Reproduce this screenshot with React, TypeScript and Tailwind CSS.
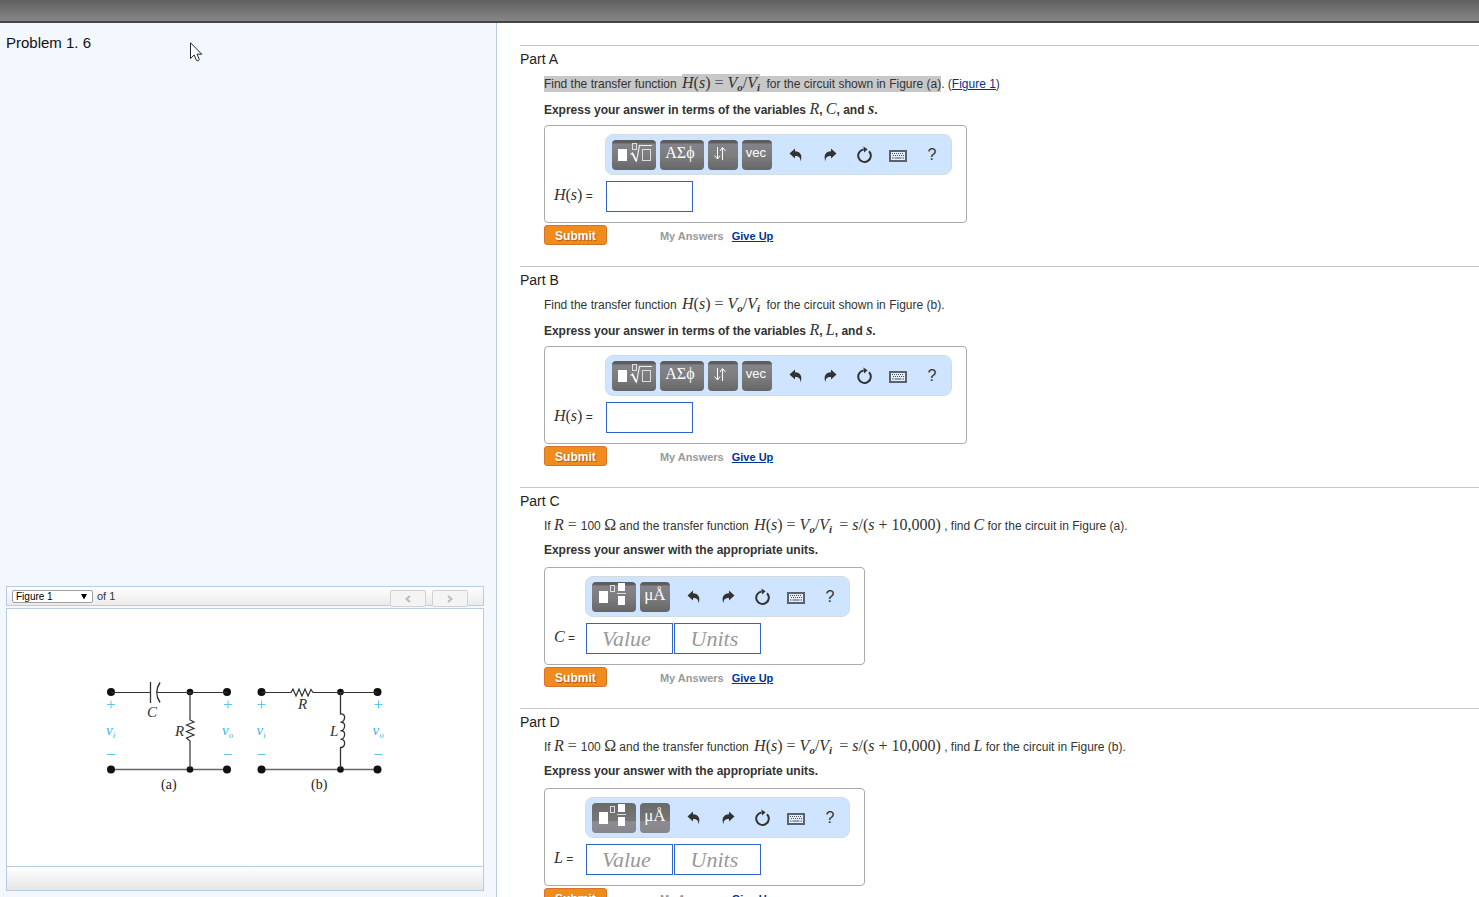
import React, { useState } from 'react';

interface SymbolProps {
  children: React.ReactNode;
  marked?: boolean;
}

// Inline maths set in a serif face
const Tex: React.FC<SymbolProps> = ({ children, marked }) => (
  <span
    className={
      marked
        ? "bg-[#c8c8c8] font-['Liberation_Serif',serif] text-[16px]"
        : "font-['Liberation_Serif',serif] text-[16px]"
    }
  >
    {children}
  </span>
);

const Sub: React.FC<{ children: React.ReactNode }> = ({ children }) => (
  <sub className="font-bold text-[11px] leading-none">{children}</sub>
);

const Eq: React.FC = () => <span className="mx-1 text-[#555]">=</span>;

const TransferFunction: React.FC<{ marked?: boolean }> = ({ marked }) => (
  <span className="mr-[3px] ml-[2px]">
    <Tex marked={marked}>
      <i>H</i>(<i>s</i>)<Eq />
      <i>V</i>
      <Sub>
        <i>o</i>
      </Sub>
      /<i>V</i>
      <Sub>
        <i>i</i>
      </Sub>
    </Tex>
  </span>
);

const UndoIcon = () => (
  <svg width="14" height="14" viewBox="0 0 14 14" fill="#333" aria-hidden="true">
    <path d="M0.5 5.5 6 0.5V3.3C11.5 3.4 13.8 7.5 11.5 13.5 11.6 9.6 10 8 6 8V10.5Z" />
  </svg>
);

const RedoIcon = () => (
  <svg width="14" height="14" viewBox="0 0 14 14" fill="#333" aria-hidden="true">
    <path d="M13.5 5.5 8 0.5V3.3C2.5 3.4 0.2 7.5 2.5 13.5 2.4 9.6 4 8 8 8V10.5Z" />
  </svg>
);

const ResetIcon = () => (
  <svg width="16" height="18" viewBox="0 0 16 18" fill="none" aria-hidden="true">
    <path d="M13 5.2A6.3 6.3 0 1 1 7.6 3.4" stroke="#333" strokeWidth="2" />
    <path d="M7.4 0.5 11.6 3.2 8.2 6.5Z" fill="#333" />
  </svg>
);

const KeyboardIcon = () => (
  <svg width="18" height="12" viewBox="0 0 18 12" fill="none" className="mt-[2px]" aria-hidden="true">
    <rect x="1" y="1" width="16" height="10" fill="#e4eefa" stroke="#5a626c" strokeWidth="2" />
    <path d="M3 3.5H15M4 5.5H15" stroke="#4a525c" strokeWidth="1" strokeDasharray="1 1" />
    <path d="M3 8H4.5M5.5 8H12.5M13.5 8H15" stroke="#4a525c" strokeWidth="1.2" />
  </svg>
);

const RootTemplateIcon = () => (
  <svg width="44" height="30" viewBox="0 0 44 30" fill="none" aria-hidden="true">
    <rect x="6" y="9" width="9" height="12" fill="#fff" />
    <path d="M18.5 14.5 20.5 13 24.5 21 27.5 5.5H40" stroke="#eee" strokeWidth="1.2" />
    <path d="M20.5 13.5 24 21" stroke="#fff" strokeWidth="1.6" />
    <rect x="20.5" y="3.5" width="4" height="6" stroke="#ddd" />
    <rect x="30.5" y="9.5" width="8" height="11" stroke="#ddd" />
  </svg>
);

const FractionTemplateIcon = () => (
  <svg width="44" height="30" viewBox="0 0 44 30" fill="none" aria-hidden="true">
    <rect x="7" y="9" width="9" height="12" fill="#fff" />
    <rect x="18.5" y="3.5" width="4" height="6" stroke="#ddd" />
    <rect x="26" y="1" width="7" height="8" fill="#fff" />
    <path d="M25 11.5H34" stroke="#ddd" />
    <rect x="26" y="14" width="7" height="9" fill="#fff" />
  </svg>
);

const ArrowsIcon = () => (
  <svg width="30" height="30" viewBox="0 0 30 30" fill="none" stroke="#fff" aria-hidden="true">
    <path d="M9.5 7V19M6.5 15.5 9.5 19 12 15.5M14.5 20V8M12 11 14.5 7.5 17.5 11" />
  </svg>
);

interface ToolButtonProps {
  label: string;
  wide?: boolean;
  pressed?: boolean;
  children: React.ReactNode;
}

const ToolButton: React.FC<ToolButtonProps> = ({ label, wide, pressed, children }) => (
  <button
    type="button"
    aria-label={label}
    className={`h-[30px] overflow-hidden rounded text-white ${wide ? 'w-11' : 'w-[30px]'} ${
      pressed
        ? 'bg-[linear-gradient(#6a6a6a,#777_60%,#8d8c94_62%,#86868a)]'
        : 'bg-[linear-gradient(#5c5c5c_8%,#84838a_14%,#7c7c7f_55%,#666)]'
    }`}
  >
    {children}
  </button>
);

const IconButton: React.FC<{ label: string; children: React.ReactNode }> = ({ label, children }) => (
  <button type="button" aria-label={label} className="flex h-[30px] w-[34px] items-center justify-center">
    {children}
  </button>
);

const Toolbar: React.FC<{ units?: boolean; pressed?: boolean }> = ({ units, pressed }) => (
  <div className="flex h-[41px] items-center gap-1 rounded-lg border border-[#d5dbe2] bg-[#cfe5ff] pr-[2px] pl-[6px]">
    {units ? (
      <>
        <ToolButton label="Templates" wide pressed={pressed}>
          <FractionTemplateIcon />
        </ToolButton>
        <ToolButton label="Units" pressed={pressed}>
          <span className="block pb-1 font-['Liberation_Serif',serif] text-[17px] leading-[24px]">μÅ</span>
        </ToolButton>
      </>
    ) : (
      <>
        <ToolButton label="Templates" wide>
          <RootTemplateIcon />
        </ToolButton>
        <ToolButton label="Symbols" wide>
          <span className="block pr-1 pb-1 font-['Liberation_Serif',serif] text-[16px] leading-[24px]">
            ΑΣϕ
          </span>
        </ToolButton>
        <ToolButton label="Arrows">
          <ArrowsIcon />
        </ToolButton>
        <ToolButton label="Vector">
          <span className="block pr-[2px] pb-1 text-[13px] leading-[24px]">vec</span>
        </ToolButton>
      </>
    )}
    <div className="ml-[3px] flex">
      <IconButton label="Undo">
        <UndoIcon />
      </IconButton>
      <IconButton label="Redo">
        <RedoIcon />
      </IconButton>
      <IconButton label="Reset">
        <ResetIcon />
      </IconButton>
      <IconButton label="Keyboard">
        <KeyboardIcon />
      </IconButton>
      <IconButton label="Help">
        <span className="text-[16px] text-[#333]">?</span>
      </IconButton>
    </div>
  </div>
);

interface PartProps {
  id: string;
  question: React.ReactNode;
  instruction: React.ReactNode;
  label: React.ReactNode;
  units?: boolean;
  pressed?: boolean;
}

const fieldClass =
  "h-[31px] w-[87px] border border-[#2f65c8] bg-white pr-3 pl-[6px] text-center font-['Liberation_Serif',serif] text-[22px] italic placeholder:text-[#999] focus:outline-none";

const Part: React.FC<PartProps> = ({ id, question, instruction, label, units, pressed }) => (
  <section className="border-t border-[#c8c8c8] pt-[3px] pb-[21px]">
    <h2 className="mb-px text-[14px] leading-5 text-[#222]">Part {id}</h2>
    <div className="pl-6">
      <p className="h-[26px] text-[12px] leading-[25px] whitespace-nowrap">{question}</p>
      <p className="h-[25px] text-[12px] leading-[25px] font-bold whitespace-nowrap">{instruction}</p>
      <div className="mt-1 grid w-fit grid-cols-[auto_auto] gap-y-[6px] rounded border border-[#aaa] pt-2 pr-[14px] pb-[10px] pl-[9px]">
        <div className="col-start-2">
          <Toolbar units={units} pressed={pressed} />
        </div>
        <label
          htmlFor={`answer-${id}`}
          className={`col-start-1 flex items-center pb-[3px] text-[12px] ${units ? 'w-[31px]' : 'w-[51px]'}`}
        >
          <span>{label}</span>
        </label>
        <div className="flex gap-px pl-px">
          <input id={`answer-${id}`} className={fieldClass} placeholder={units ? 'Value' : undefined} />
          {units && <input aria-label="Units" className={fieldClass} placeholder="Units" />}
        </div>
      </div>
      <div className="mt-[2px] flex h-5 items-center text-[11px] font-bold">
        <button
          type="button"
          className="h-5 w-[63px] rounded-[3px] border border-[#d2752a] bg-[#f08c1e] pt-px text-[12px] font-bold text-white [text-shadow:1px_1px_1px_#a85a10]"
        >
          Submit
        </button>
        <span className="ml-[53px] pt-[2px] text-[#999]">My Answers</span>
        <a href="#give-up" className="ml-2 pt-[2px] text-[#003399] underline">
          Give Up
        </a>
      </div>
    </div>
  </section>
);

const HsLabel = () => (
  <>
    <Tex>
      <i>H</i>(<i>s</i>)
    </Tex>{' '}
    =
  </>
);

const GivenQuestion: React.FC<{ unknown: string; figure: string }> = ({ unknown, figure }) => (
  <>
    If{' '}
    <Tex>
      <i>R</i>
      <Eq />
    </Tex>
    100 <Tex>Ω</Tex> and the transfer function <TransferFunction />
    <Tex>
      <Eq />
      <i>s</i>/(<i>s</i> + 10,000)
    </Tex>{' '}
    , find{' '}
    <Tex>
      <i>{unknown}</i>
    </Tex>{' '}
    for the circuit in Figure ({figure}).
  </>
);

const Terminals: React.FC<{ x: number }> = ({ x }) => (
  <g>
    <path d={`M${x} 94.5H${x + 116}`} stroke="#666" strokeWidth="1.3" />
    <g fill="#111">
      <circle cx={x} cy="17" r="4" />
      <circle cx={x + 79} cy="17" r="3.3" />
      <circle cx={x + 116} cy="17" r="4" />
      <circle cx={x} cy="94.5" r="4" />
      <circle cx={x + 79} cy="94.5" r="3.3" />
      <circle cx={x + 116} cy="94.5" r="4" />
    </g>
    <g stroke="#5cc4ee">
      <path d={`M${x - 4} 29.5H${x + 4}M${x} 25.5V33.5M${x - 4} 79.5H${x + 4}`} />
      <path d={`M${x + 113} 29.5H${x + 121}M${x + 117} 25.5V33.5M${x + 113} 79.5H${x + 121}`} />
    </g>
    <g fill="#3bb4e6" fontStyle="italic" fontSize="15">
      <text x={x - 5} y="60">
        v<tspan fontSize="9" dy="3">i</tspan>
      </text>
      <text x={x + 111} y="60">
        v<tspan fontSize="9" dy="3">o</tspan>
      </text>
    </g>
  </g>
);

const Circuits = () => (
  <svg
    width="292"
    height="125"
    viewBox="0 0 292 125"
    fill="none"
    className="font-['Liberation_Serif',serif]"
    role="img"
    aria-label="Circuits (a) and (b)"
  >
    <Terminals x={11} />
    <Terminals x={161.5} />
    <g stroke="#333">
      <path d="M11 17.5H50.5M57 17.5H127.5" />
      <path d="M50.5 7V28" strokeWidth="1.3" />
      <path d="M60 7.5Q53.5 17.5 60 27.5" strokeWidth="1.4" />
      <path d="M90 17V45L94 47 86.5 50 94 53.5 86.5 56.5 94 60 86.5 63 90 66V94" strokeWidth="1.2" />
      <path d="M161.5 17.5H191L193 14 196 21 199 14 202 21 205 14 208 21 211 14.5 213 17.5H277.5" strokeWidth="1.2" />
      <path
        d="M240.5 17V39C246 38 246 46 240.5 47.5 246 45.5 246 55.5 240.5 56 246 54 246 64 240.5 64.5 246 63 246 73 240.5 72.5V94"
        strokeWidth="1.3"
      />
    </g>
    <g fill="#333" fontStyle="italic" fontSize="15">
      <text x="47" y="42">C</text>
      <text x="75" y="61">R</text>
      <text x="198" y="34">R</text>
      <text x="230" y="61">L</text>
    </g>
    <g fill="#222" fontSize="14">
      <text x="61" y="114">(a)</text>
      <text x="211" y="114">(b)</text>
    </g>
  </svg>
);

const NavButton: React.FC<{ label: string; path: string }> = ({ label, path }) => (
  <button
    type="button"
    aria-label={label}
    className="flex h-[17px] w-9 items-center justify-center rounded-[2px] border border-[#d2d2d2] bg-[#f4f4f4]"
  >
    <svg width="8" height="8" viewBox="0 0 8 8" fill="none" stroke="#bbb" strokeWidth="2" aria-hidden="true">
      <path d={path} />
    </svg>
  </button>
);

const FigurePanel: React.FC = () => {
  const [figure, setFigure] = useState<string>('Figure 1');

  return (
    <div className="mt-auto mr-3 mb-[6px] ml-[6px]">
      <div className="flex h-5 items-start border border-[#b8cde0] bg-linear-to-b from-white to-[#ebebeb] pr-[15px] pl-[5px]">
        <div className="relative mt-[3px] h-[13px]">
          <select
            aria-label="Figure"
            value={figure}
            onChange={(e) => setFigure(e.target.value)}
            className="block h-[13px] w-[81px] appearance-none rounded-[2px] border border-[#a0a0a0] bg-white pl-[3px] text-[10px] leading-[11px] text-black"
          >
            <option>Figure 1</option>
          </select>
          <svg
            width="6"
            height="6"
            viewBox="0 0 6 6"
            className="pointer-events-none absolute top-1 right-[6px]"
            aria-hidden="true"
          >
            <path d="M0 0H6L3 5.5Z" />
          </svg>
        </div>
        <span className="mt-px ml-1 text-[11px] leading-4">of 1</span>
        <div className="mt-[3px] ml-auto flex gap-[6px]">
          <NavButton label="Previous figure" path="M6 1 2.5 4 6 7" />
          <NavButton label="Next figure" path="M2 1 5.5 4 2 7" />
        </div>
      </div>
      <div className="mt-[2px] border border-[#b8cde0] bg-white">
        <div className="flex h-[257px] items-center justify-center pl-[3px]">
          <Circuits />
        </div>
        <div className="h-6 border-t border-[#b8cde0] bg-linear-to-b from-white to-[#e6e6e6]" />
      </div>
    </div>
  );
};

const App: React.FC = () => {
  return (
    <div className="flex h-screen flex-col overflow-hidden bg-white font-['Liberation_Sans',Arial,sans-serif] text-[#333]">
      <header className="h-[23px] shrink-0 border-b-2 border-[#444] bg-linear-to-b from-[#606060] to-[#868686]" />
      <div className="flex min-h-0 flex-1">
        <aside className="relative flex w-[33.6%] shrink-0 flex-col border-r border-[#b8cde0] bg-[#f3f8ff]">
          <h1 className="pt-[10px] pl-[6px] text-[15px] leading-5 text-[#111]">Problem 1. 6</h1>
          <svg
            width="13"
            height="20"
            viewBox="0 0 13 20"
            className="pointer-events-none absolute top-[19px] left-[190px]"
            aria-hidden="true"
          >
            <path
              d="M0.5 0.8V16.5L4.2 13 6.5 18.5Q8 19.5 9.3 17.5L7 12.2H11.8Z"
              fill="#fff"
              stroke="#223"
            />
          </svg>
          <FigurePanel />
        </aside>
        <main className="min-w-0 flex-1 overflow-hidden pt-[22px] pl-[23px]">
          <Part
            id="A"
            question={
              <>
                <span className="bg-[#c8c8c8] py-px">
                  Find the transfer function <TransferFunction marked /> for the circuit shown in Figure (a)
                </span>
                . (
                <a href="#figure-1" className="text-[#003399] underline">
                  Figure 1
                </a>
                )
              </>
            }
            instruction={
              <>
                Express your answer in terms of the variables{' '}
                <Tex>
                  <i className="font-normal">R</i>
                </Tex>
                ,{' '}
                <Tex>
                  <i className="font-normal">C</i>
                </Tex>
                , and{' '}
                <Tex>
                  <i>s</i>
                </Tex>
                .
              </>
            }
            label={<HsLabel />}
          />
          <Part
            id="B"
            question={
              <>
                Find the transfer function <TransferFunction /> for the circuit shown in Figure (b).
              </>
            }
            instruction={
              <>
                Express your answer in terms of the variables{' '}
                <Tex>
                  <i className="font-normal">R</i>
                </Tex>
                ,{' '}
                <Tex>
                  <i className="font-normal">L</i>
                </Tex>
                , and{' '}
                <Tex>
                  <i>s</i>
                </Tex>
                .
              </>
            }
            label={<HsLabel />}
          />
          <Part
            id="C"
            units
            question={<GivenQuestion unknown="C" figure="a" />}
            instruction="Express your answer with the appropriate units."
            label={
              <>
                <Tex>
                  <i>C</i>
                </Tex>{' '}
                =
              </>
            }
          />
          <Part
            id="D"
            units
            pressed
            question={<GivenQuestion unknown="L" figure="b" />}
            instruction="Express your answer with the appropriate units."
            label={
              <>
                <Tex>
                  <i>L</i>
                </Tex>{' '}
                =
              </>
            }
          />
        </main>
      </div>
    </div>
  );
};

export default App;
